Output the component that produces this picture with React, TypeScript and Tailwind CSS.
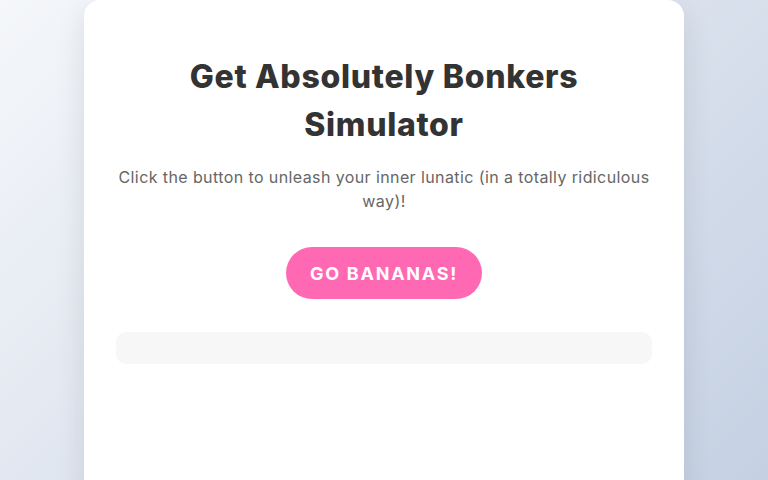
import { useState } from "react";

const lines = [
  "You are now officially bonkers. 🍌",
  "A llama just sent you a friend request.",
  "Your socks have declared independence.",
];

export default function App() {
  const [msg, setMsg] = useState("");

  const goBananas = () => {
    setMsg(lines[Math.floor(Math.random() * lines.length)]);
  };

  return (
    <div className="flex min-h-screen justify-center bg-[linear-gradient(135deg,#f5f7fa_0%,#c3cfe2_100%)] font-['Inter','Liberation_Sans',sans-serif]">
      <div className="h-[520px] w-[600px] rounded-2xl bg-white px-8 pt-[53px] text-center shadow-[0_10px_30px_rgba(0,0,0,0.1)]">
        <h1 className="text-[32px] font-extrabold leading-[48px] tracking-[0.7px] text-[#333]">
          Get Absolutely Bonkers
          <br />
          Simulator
        </h1>
        <p className="mt-4 text-[16px] leading-6 tracking-[0.4px] text-[#666]">
          Click the button to unleash your inner lunatic (in a totally ridiculous way)!
        </p>
        <button
          onClick={goBananas}
          className="mt-[34px] h-[52px] rounded-full bg-[#ff69b4] px-6 text-[18px] font-bold uppercase tracking-[1.75px] text-white"
        >
          Go Bananas!
        </button>
        <div className="mt-[33px] flex min-h-8 items-center justify-center rounded-[10px] bg-[#f7f7f7] text-[#666]">
          {msg}
        </div>
      </div>
    </div>
  );
}
